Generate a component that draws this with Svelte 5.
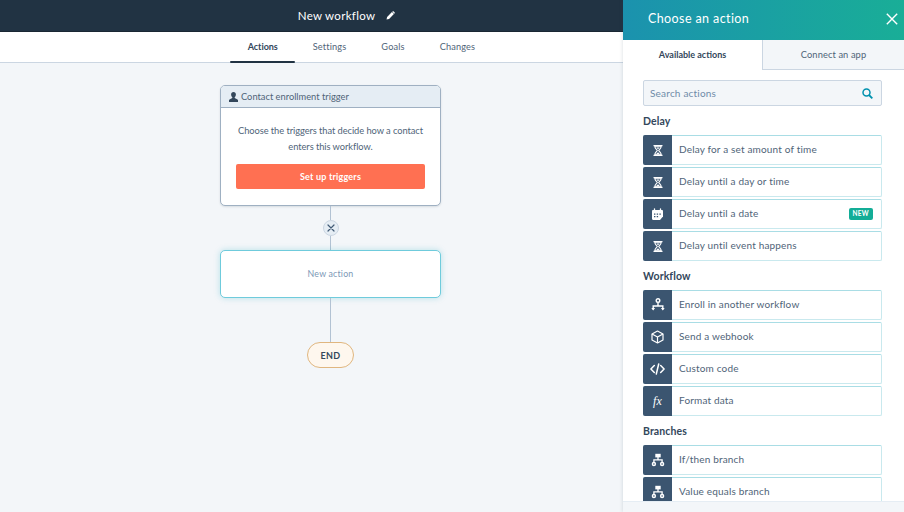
<script>
  const sections = [
    {
      title: 'Delay',
      items: [
        { label: 'Delay for a set amount of time', icon: 'hourglass' },
        { label: 'Delay until a day or time', icon: 'hourglass' },
        { label: 'Delay until a date', icon: 'calendar', isNew: true },
        { label: 'Delay until event happens', icon: 'hourglass' },
      ],
    },
    {
      title: 'Workflow',
      items: [
        { label: 'Enroll in another workflow', icon: 'enroll' },
        { label: 'Send a webhook', icon: 'box' },
        { label: 'Custom code', icon: 'code' },
        { label: 'Format data', icon: 'fx' },
      ],
    },
    {
      title: 'Branches',
      items: [
        { label: 'If/then branch', icon: 'branch' },
        { label: 'Value equals branch', icon: 'branch' },
      ],
    },
  ];
  const tabs = ['Actions', 'Settings', 'Goals', 'Changes'];
</script>

{#snippet icon(name)}
  {#if name === 'hourglass'}
    <svg width="12" height="13" viewBox="0 0 12 13">
      <path d="M1.500 1h9v1.300h-9zM1.500 10.700h9V12h-9z" fill="#fff" />
      <path d="M2.800 2.300c0 2.200 1.900 3 2.500 4.200-.6 1.200-2.500 2-2.500 4.200h6.400c0-2.200-1.900-3-2.500-4.200.6-1.200 2.500-2 2.500-4.200z" fill="none" stroke="#fff" stroke-width="1.100" />
      <path d="M4.300 3.400h3.400L6 5.300zM3.900 10.200 6 8.200l2.100 2z" fill="#fff" />
    </svg>
  {:else if name === 'calendar'}
    <svg width="13" height="13" viewBox="0 0 13 13">
      <path d="M2.200 2h8.600c.7 0 1.200.5 1.200 1.200v5.300L9 12H2.200C1.500 12 1 11.500 1 10.800V3.200C1 2.500 1.500 2 2.200 2z" fill="#fff" />
      <path d="M3.500.8v2.400M9.500.8v2.400" stroke="#fff" stroke-width="1.300" stroke-linecap="round" />
      <path d="M3 5.500h1.400v1.300H3zM5.700 5.500h1.400v1.300H5.700zM8.400 5.500h1.400v1.300H8.400zM3 8h1.400v1.300H3zM5.700 8h1.400v1.300H5.700z" fill="#3b5570" />
    </svg>
  {:else if name === 'enroll'}
    <svg width="14" height="14" viewBox="0 0 14 14" fill="none" stroke="#fff">
      <circle cx="7" cy="2.600" r="1.800" stroke-width="1.400" />
      <path d="M7 4.500v3.500M2.200 11.500V8h9.600v3.500" stroke-width="1.400" />
      <path d="M.3 10h3.800L2.200 12.600zM9.900 10h3.800L11.800 12.600z" fill="#fff" stroke="none" />
    </svg>
  {:else if name === 'box'}
    <svg width="13" height="14" viewBox="0 0 13 14" fill="none" stroke="#fff" stroke-width="1.200" stroke-linejoin="round">
      <path d="M6.500 1 12 4v6l-5.500 3L1 10V4z" />
      <path d="M1 4l5.500 3L12 4M6.500 7v6" />
    </svg>
  {:else if name === 'code'}
    <svg width="15" height="12" viewBox="0 0 15 12" fill="none" stroke="#fff" stroke-width="1.500" stroke-linecap="round" stroke-linejoin="round">
      <path d="M4.300 2.500.9 6l3.400 3.500M10.700 2.500 14.100 6l-3.400 3.500M8.700 1 6.300 11" />
    </svg>
  {:else if name === 'fx'}
    <span class="fx">fx</span>
  {:else if name === 'branch'}
    <svg width="14" height="14" viewBox="0 0 14 14">
      <path d="M4.300 .8h5.400v3.600H4.300z" fill="#fff" />
      <path d="M7 4v3M2.900 9.500V6.800h8.200v2.700" fill="none" stroke="#fff" stroke-width="1.300" />
      <circle cx="2.900" cy="11" r="2.200" fill="#fff" />
      <circle cx="11.100" cy="11" r="2.200" fill="#fff" />
      <circle cx="2.900" cy="11" r=".8" fill="#3b5570" />
      <circle cx="11.100" cy="11" r=".8" fill="#3b5570" />
    </svg>
  {/if}
{/snippet}

<div class="page">
  <main class="editor">
    <header class="topbar">
      <span class="wf-name">New workflow</span>
      <svg class="pencil" width="9" height="9" viewBox="0 0 10 10">
        <path d="M.6 9.400 1.200 6.600 6.600 1.200 8.800 3.400 3.400 8.800zM7.300.5C7.700.1 8.200.1 8.600.5L9.500 1.400C9.900 1.800 9.900 2.300 9.500 2.700L9.200 3 7 .8z" fill="#fff" />
      </svg>
    </header>

    <nav class="tabs">
      {#each tabs as tab, i}
        <span class="tab" class:active={i === 0}>{tab}</span>
      {/each}
    </nav>

    <div class="canvas">
      <section class="card trigger">
        <div class="card-head">
          <svg width="9" height="10" viewBox="0 0 9 10">
            <path d="M4.500 0C6 0 6.900 1 6.900 2.500 6.900 3.700 6.400 4.600 5.700 5.200V6L8.500 7.400C8.900 7.600 9 8 9 8.400V10H0V8.400C0 8 .1 7.600.5 7.400L3.300 6V5.200C2.600 4.600 2.100 3.700 2.100 2.500 2.100 1 3 0 4.500 0z" fill="#33475b" />
          </svg>
          Contact enrollment trigger
        </div>
        <div class="card-body">
          <p>Choose the triggers that decide how a contact enters this workflow.</p>
          <button class="cta">Set up triggers</button>
        </div>
      </section>

      <div class="line short"></div>
      <div class="remove">
        <svg width="8" height="8" viewBox="0 0 8 8">
          <path d="M1 1l6 6M7 1 1 7" stroke="#425b76" stroke-width="1.200" fill="none" stroke-linecap="round" />
        </svg>
      </div>
      <div class="line short"></div>

      <section class="card new-action">New action</section>

      <div class="line long"></div>
      <div class="end">END</div>
    </div>
  </main>

  <aside class="panel">
    <header class="panel-head">
      <h1>Choose an action</h1>
      <svg width="12" height="12" viewBox="0 0 12 12">
        <path d="M.8.8l10.400 10.400M11.200.8.800 11.200" stroke="#fff" stroke-width="1.400" fill="none" />
      </svg>
    </header>

    <div class="panel-tabs">
      <span class="ptab current">Available actions</span>
      <span class="ptab">Connect an app</span>
    </div>

    <div class="panel-body">
      <div class="search">
        <span>Search actions</span>
        <svg width="11" height="11" viewBox="0 0 11 11" fill="none" stroke="#0091ae" stroke-width="1.500">
          <circle cx="4.500" cy="4.500" r="3.500" />
          <path d="M7 7l3.300 3.300" stroke-width="1.800" />
        </svg>
      </div>

      {#each sections as section}
        <h2>{section.title}</h2>
        <ul>
          {#each section.items as item}
            <li>
              <span class="item-icon">{@render icon(item.icon)}</span>
              <span class="item-label">{item.label}</span>
              {#if item.isNew}<span class="new">NEW</span>{/if}
            </li>
          {/each}
        </ul>
      {/each}
    </div>

    <div class="panel-foot"></div>
  </aside>
</div>

<style>
  :global(body) {
    margin: 0;
    font-family: Lato, "Open Sans", sans-serif;
    color: #33475b;
  }

  .page {
    display: flex;
    width: 904px;
    height: 512px;
    overflow: hidden;
    background: #f3f6f9;
  }

  /* left side */
  .editor {
    flex: 0 0 623px;
    display: flex;
    flex-direction: column;
    min-width: 0;
  }
  .topbar {
    height: 32px;
    flex-shrink: 0;
    box-sizing: border-box;
    background: #213343;
    border-bottom: 1px solid #1a2733;
    display: flex;
    align-items: center;
    justify-content: center;
    gap: 11px;
    padding-left: 70px;
  }
  .wf-name {
    color: #fff;
    font-size: 11.500px;
    font-weight: 400;
    letter-spacing: 0.3px;
  }
  .tabs {
    height: 31px;
    flex-shrink: 0;
    box-sizing: border-box;
    background: #fff;
    border-bottom: 1px solid #cbd6e2;
    display: flex;
    justify-content: center;
    padding-left: 100px;
  }
  .tab {
    font-size: 9.200px;
    letter-spacing: 0.15px;
    line-height: 29px;
    padding: 0 17.500px;
    color: #4f6478;
    position: relative;
  }
  .tab.active {
    color: #33475b;
    font-weight: 700;
    letter-spacing: -0.05px;
    font-size: 9px;
  }
  .tab.active::after {
    content: '';
    position: absolute;
    left: 0;
    right: 0;
    bottom: -1px;
    height: 2px;
    background: #213343;
    border-radius: 1px;
  }

  .canvas {
    flex: 1;
    display: flex;
    flex-direction: column;
    align-items: center;
    padding-top: 22px;
    padding-left: 38px;
  }
  .card {
    width: 221px;
    box-sizing: border-box;
    border-radius: 5px;
    background: #fff;
  }
  .trigger {
    border: 1px solid #9fb0c2;
    height: 121px;
    box-shadow: 0 1px 2px rgba(51, 71, 91, 0.15);
    overflow: hidden;
    flex-shrink: 0;
  }
  .card-head {
    height: 22px;
    box-sizing: border-box;
    background: #e5edf4;
    border-bottom: 1px solid #9fb0c2;
    display: flex;
    align-items: center;
    gap: 3px;
    padding-left: 8px;
    font-size: 9.300px;
    letter-spacing: 0;
    color: #4f6478;
  }
  .card-body {
    padding: 0 15px;
    text-align: center;
  }
  .card-body p {
    margin: 15px 0 10px;
    font-size: 9.300px;
    line-height: 15.500px;
    letter-spacing: -0.06px;
    color: #4f6478;
  }
  .cta {
    display: block;
    width: 100%;
    height: 25px;
    border: 0;
    padding: 0;
    border-radius: 2px;
    background: #ff7052;
    color: #fff;
    font-family: inherit;
    font-size: 9px;
    font-weight: 700;
    letter-spacing: 0.2px;
  }
  .line {
    width: 1px;
    background: #b2c2d3;
    flex-shrink: 0;
  }
  .line.short { height: 14px; }
  .line.long { height: 44px; }
  .remove {
    width: 16px;
    height: 16px;
    flex-shrink: 0;
    box-sizing: border-box;
    border: 1px solid #cbd6e2;
    border-radius: 50%;
    background: #e5edf4;
    display: flex;
    align-items: center;
    justify-content: center;
  }
  .new-action {
    height: 48px;
    flex-shrink: 0;
    border: 1px solid #6fcbdc;
    border-radius: 5px;
    box-shadow: 0 0 6px rgba(0, 164, 189, 0.25);
    display: flex;
    align-items: center;
    justify-content: center;
    padding-bottom: 1px;
    font-size: 8.800px;
    letter-spacing: 0.2px;
    color: #7c98b6;
  }
  .end {
    width: 47px;
    height: 26px;
    flex-shrink: 0;
    box-sizing: border-box;
    border: 1px solid #e0b67f;
    border-radius: 13px;
    background: #fef7ee;
    display: flex;
    align-items: center;
    justify-content: center;
    font-size: 9px;
    font-weight: 700;
    letter-spacing: 0.4px;
    color: #33475b;
  }

  /* right panel */
  .panel {
    flex: 0 0 281px;
    position: relative;
    display: flex;
    flex-direction: column;
    background: #fff;
    box-shadow: -1px 0 3px rgba(51, 71, 91, 0.12);
  }
  .panel-head {
    height: 40px;
    flex-shrink: 0;
    box-sizing: border-box;
    background: linear-gradient(90deg, #1b92ae, #19ae97);
    display: flex;
    align-items: center;
    justify-content: space-between;
    padding: 0 6px 3px 25px;
  }
  .panel-head h1 {
    margin: 0;
    color: #fff;
    font-size: 12.500px;
    font-weight: 400;
    letter-spacing: 0.4px;
  }
  .panel-tabs {
    display: flex;
    height: 30px;
    flex-shrink: 0;
  }
  .ptab {
    flex: 1;
    box-sizing: border-box;
    background: #f3f6f9;
    border-bottom: 1px solid #cbd6e2;
    border-left: 1px solid #cbd6e2;
    text-align: center;
    font-size: 9.300px;
    letter-spacing: 0.1px;
    line-height: 29px;
    color: #4f6478;
  }
  .ptab.current {
    flex: 0 0 139px;
    background: #fff;
    border: 0;
    font-weight: 700;
    font-size: 9px;
    letter-spacing: 0;
    line-height: 29px;
    color: #33475b;
  }
  .panel-body {
    flex: 1;
    min-height: 0;
    overflow: hidden;
    padding: 10px 22px 0 20px;
  }
  .search {
    height: 26px;
    box-sizing: border-box;
    border: 1px solid #cbd6e2;
    border-radius: 2px;
    background: #f3f6f9;
    display: flex;
    align-items: center;
    justify-content: space-between;
    padding: 0 8px 0 6px;
    font-size: 10px;
    letter-spacing: 0.2px;
    color: #6f8ba8;
  }
  h2 {
    margin: 8px 0 6px;
    font-size: 10.500px;
    line-height: 15px;
    font-weight: 700;
    letter-spacing: 0.1px;
    color: #33475b;
  }
  ul {
    list-style: none;
    margin: 0 0 4px;
    padding: 0;
  }
  li {
    height: 30px;
    box-sizing: border-box;
    margin-bottom: 2px;
    display: flex;
    align-items: center;
    border: 1px solid #c9e9ee;
    border-top-color: #a9dde5;
    border-left: 0;
    border-radius: 2px;
    font-size: 10px;
    letter-spacing: 0.17px;
    color: #4f6478;
  }
  .item-icon {
    flex: 0 0 29px;
    align-self: stretch;
    margin: -1px 0;
    background: #3b5570;
    border-radius: 2px 0 0 2px;
    display: flex;
    align-items: center;
    justify-content: center;
  }
  .fx {
    font-family: "Liberation Serif", serif;
    font-style: italic;
    font-size: 12px;
    color: #fff;
  }
  .item-label {
    flex: 1;
    padding-left: 7px;
    padding-bottom: 2px;
  }
  .new {
    margin-right: 8px;
    background: #13ad97;
    color: #fff;
    border-radius: 2px;
    font-size: 6.500px;
    font-weight: 700;
    letter-spacing: 0.3px;
    padding: 2px 4px;
    line-height: 8px;
  }
  .panel-foot {
    position: absolute;
    left: 0;
    right: 0;
    bottom: 0;
    height: 11px;
    background: #f3f6f9;
    border-top: 1px solid #e5edf4;
    box-sizing: border-box;
  }
</style>
